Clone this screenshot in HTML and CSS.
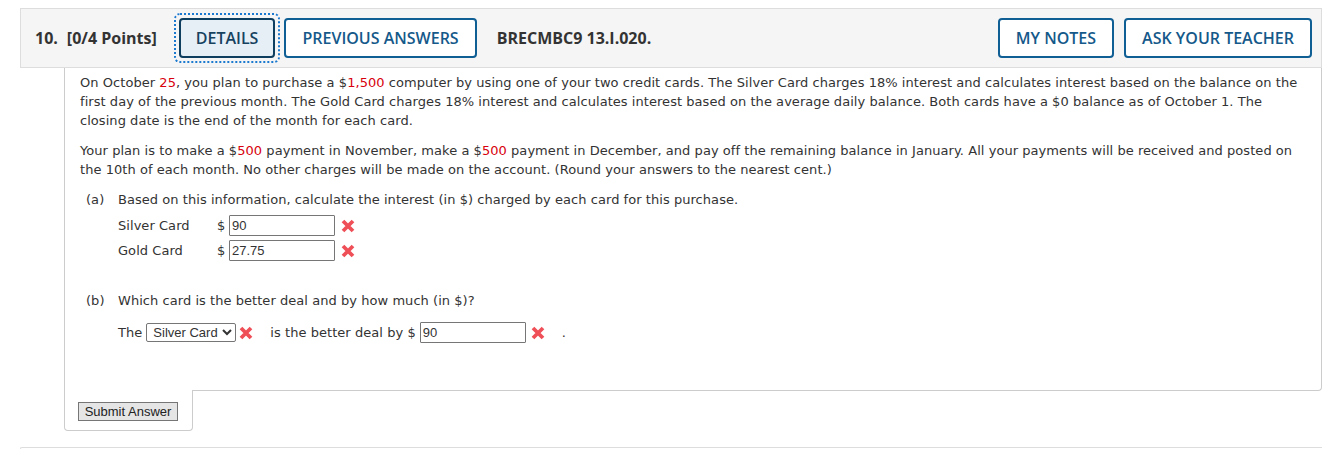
FILE: index.html
```html
<!DOCTYPE html>
<html>
<head>
<meta charset="utf-8">
<link rel="stylesheet" href="styles.css">
</head>
<body>
<div class="question">
  <div class="qhead">
    <div class="qtitle"><span class="qnum">10.</span><span>[0/4 Points]</span></div>
    <div class="focus-ring"><button class="hbtn hbtn-active">DETAILS</button></div>
    <button class="hbtn">PREVIOUS ANSWERS</button>
    <div class="qcode">BRECMBC9 13.I.020.</div>
    <div class="spacer"></div>
    <button class="hbtn">MY NOTES</button>
    <button class="hbtn">ASK YOUR TEACHER</button>
  </div>
  <div class="qbody">
    <p>On October <span class="red">25</span>, you plan to purchase a $<span class="red">1,500</span> computer by using one of your two credit cards. The Silver Card charges 18% interest and calculates interest based on the balance on the first day of the previous month. The Gold Card charges 18% interest and calculates interest based on the average daily balance. Both cards have a $0 balance as of October 1. The closing date is the end of the month for each card.</p>
    <p>Your plan is to make a $<span class="red">500</span> payment in November, make a $<span class="red">500</span> payment in December, and pay off the remaining balance in January. All your payments will be received and posted on the 10th of each month. No other charges will be made on the account. (Round your answers to the nearest cent.)</p>
    <div class="part">
      <div class="plabel">(a)</div>
      <div class="pcontent">
        <div class="ptext">Based on this information, calculate the interest (in $) charged by each card for this purchase.</div>
        <div class="arow">
          <span class="alabel">Silver Card</span>
          <span class="dollar">$</span>
          <input class="ans" type="text" value="90">
          <svg class="xmark" viewBox="0 0 14 14" width="14" height="14"><path d="M2 2 L12 12 M12 2 L2 12" stroke="#ef4f57" stroke-width="3.8" stroke-linecap="butt"/></svg>
        </div>
        <div class="arow">
          <span class="alabel">Gold Card</span>
          <span class="dollar">$</span>
          <input class="ans" type="text" value="27.75">
          <svg class="xmark" viewBox="0 0 14 14" width="14" height="14"><path d="M2 2 L12 12 M12 2 L2 12" stroke="#ef4f57" stroke-width="3.8" stroke-linecap="butt"/></svg>
        </div>
      </div>
    </div>
    <div class="part partb">
      <div class="plabel">(b)</div>
      <div class="pcontent">
        <div class="ptext">Which card is the better deal and by how much (in $)?</div>
        <div class="brow">
          <span>The</span>
          <select class="sel"><option>Silver Card</option><option>Gold Card</option></select>
          <svg class="xmark" viewBox="0 0 14 14" width="14" height="14"><path d="M2 2 L12 12 M12 2 L2 12" stroke="#ef4f57" stroke-width="3.8" stroke-linecap="butt"/></svg>
          <span class="bettxt">is the better deal by $</span>
          <input class="ans" type="text" value="90">
          <svg class="xmark" viewBox="0 0 14 14" width="14" height="14"><path d="M2 2 L12 12 M12 2 L2 12" stroke="#ef4f57" stroke-width="3.8" stroke-linecap="butt"/></svg>
          <span class="period">.</span>
        </div>
      </div>
    </div>
  </div>
  <div class="qtab"><button class="submit">Submit Answer</button></div>
</div>
<div class="next"></div>
</body>
</html>
```
FILE: styles.css
```css
html, body {
  margin: 0;
  padding: 0;
  background: #fff;
}
body {
  padding: 8px 11px 0 20px;
  font-family: "DejaVu Sans", Verdana, sans-serif;
  color: #333;
}
.question {
  width: 1302px;
}
.qhead {
  box-sizing: border-box;
  height: 60px;
  display: flex;
  align-items: center;
  background: #f5f5f5;
  border: 1px solid #ddd;
  padding: 0 9px 0 14px;
  font-family: "Open Sans", sans-serif;
}
.qtitle {
  font-weight: 700;
  font-size: 16px;
  color: #333;
  display: flex;
  gap: 9px;
  margin-right: 17px;
}
.focus-ring {
  display: flex;
  padding: 3px;
  margin: -5px 4px -5px 0;
  border: 2px dotted #1b7ad0;
  border-radius: 6px;
}
.hbtn {
  box-sizing: border-box;
  height: 40px;
  padding: 0 16px;
  border: 2px solid #0f5f94;
  border-radius: 4px;
  background: #fff;
  color: #15598a;
  font-family: "Open Sans", sans-serif;
  font-weight: 600;
  font-size: 16px;
  margin-right: 10px;
  cursor: pointer;
}
.hbtn:last-child { margin-right: 0; }
.hbtn-active {
  background: #e7eff6;
  border-color: #0d3d5f;
  color: #16425f;
  margin-right: 0;
  padding: 0 15px;
}
.qcode {
  margin-left: 10px;
  font-weight: 700;
  font-size: 16px;
  color: #333;
}
.spacer { flex: 1; }
.qbody {
  margin-left: 44px;
  border: 1px solid #ccc;
  border-top: none;
  border-bottom-right-radius: 4px;
  padding: 5px 15px 47px 15px;
  font-size: 13px;
  line-height: 19px;
  letter-spacing: 0.05px;
}
.qbody p {
  margin: 0 0 11px 0;
}
.red { color: #d8000c; }
.part {
  display: flex;
  margin-left: 6px;
}
.plabel {
  width: 32px;
}
.pcontent { flex: 1; }
.ptext { margin-bottom: 4px; }
.arow {
  display: flex;
  align-items: center;
  height: 25px;
}
.alabel { width: 99px; }
.dollar { width: 12px; }
.ans {
  box-sizing: border-box;
  width: 106px;
  height: 21px;
  border: 1px solid #767676;
  border-radius: 1px;
  padding: 1px 2px;
  font-family: "Liberation Sans", Arial, sans-serif;
  font-size: 13px;
  color: #333;
  margin: 0;
  letter-spacing: 0;
}
.xmark {
  margin-left: 6px;
  flex: none;
}
.partb { margin-top: 28px; }
.partb .ptext { margin-bottom: 12px; }
.brow {
  display: flex;
  align-items: center;
  height: 21px;
}
.sel {
  box-sizing: border-box;
  height: 19px;
  width: 90px;
  margin: 0 0 0 4px;
  padding: 0 0 0 2px;
  border: 1px solid #767676;
  border-radius: 2px;
  font-family: "Liberation Sans", Arial, sans-serif;
  font-size: 13px;
  color: #333;
  background: #fff;
  letter-spacing: 0;
}
.brow .xmark { margin-left: 3px; }
.bettxt { margin-left: 17px; margin-right: 4px; }
.brow .ans + .xmark { margin-left: 5px; }
.period { margin-left: 17px; }
.qtab {
  box-sizing: border-box;
  width: 129px;
  margin-left: 44px;
  margin-top: -1px;
  height: 41px;
  background: #fff;
  border: 1px solid #ccc;
  border-top: none;
  border-radius: 0 0 4px 4px;
  padding: 11px 0 0 13px;
}
.submit {
  box-sizing: border-box;
  height: 19px;
  width: 100px;
  padding: 0;
  background: #e5e5e5;
  border: 1px solid #767676;
  border-radius: 0;
  font-family: "Liberation Sans", Arial, sans-serif;
  font-size: 13px;
  color: #222;
}
.next {
  margin-top: 16px;
  width: 1302px;
  height: 2px;
  border-top: 1px solid #ddd;
  border-left: 1px solid #ddd;
  border-top-left-radius: 4px;
  box-sizing: border-box;
}
```
